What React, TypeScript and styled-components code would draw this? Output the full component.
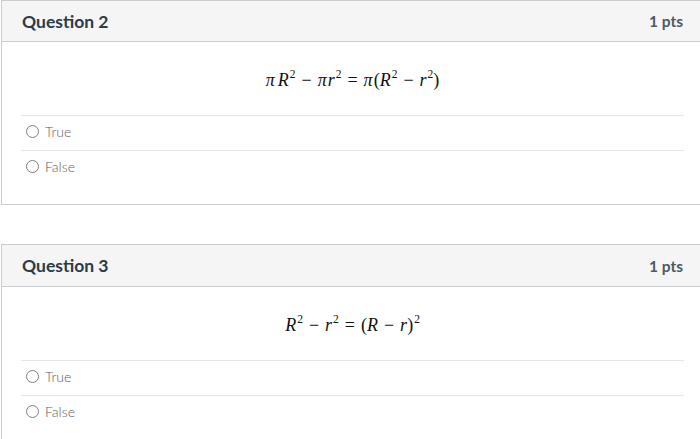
import React, { FC } from "react";
import styled, { createGlobalStyle } from "styled-components";

const GlobalStyle = createGlobalStyle`
  html, body {
    margin: 0;
    padding: 0;
    background: #ffffff;
    overflow: hidden;
  }
  body {
    font-family: Lato, "Liberation Sans", sans-serif;
    color: #2d3b45;
  }
`;

const Page = styled.div`
  display: flex;
  flex-direction: column;
  gap: 39px;
  padding-left: 1px;
  width: 703px;
`;

const Card = styled.section`
  border: 1px solid #c7cdd1;
  background: #ffffff;
`;

const Header = styled.header<{ $tall?: boolean }>`
  display: flex;
  justify-content: space-between;
  align-items: center;
  height: ${(p) => (p.$tall ? 41 : 40)}px;
  padding: 0 20px;
  background: #f5f5f5;
  border-bottom: 1px solid #c7cdd1;
`;

const Title = styled.h2`
  margin: 0;
  font-size: 17.5px;
  font-weight: 700;
  color: #2d3b45;
`;

const Points = styled.div`
  font-size: 15.5px;
  font-weight: 700;
  color: #4b5a64;
`;

const Body = styled.div`
  padding: 0 19px 19px 19px;
`;

const Equation = styled.div`
  display: flex;
  justify-content: center;
  align-items: center;
  height: 73px;
  padding-top: 4px;
  box-sizing: border-box;
  font-family: "Liberation Serif", "Times New Roman", serif;
  font-size: 18px;
  color: #111;
`;

const Formula = styled.span`
  white-space: nowrap;
`;

const Var = styled.span`
  font-style: italic;
`;

const Pi = styled.span<{ $gap?: number }>`
  font-style: italic;
  margin-right: ${(p) => p.$gap ?? 1}px;
`;

const Op = styled.span`
  margin: 0 6px;
`;

const Sup = styled.sup`
  font-size: 11.5px;
  vertical-align: 8px;
  line-height: 0;
  margin-left: 1px;
`;

const Answer = styled.label`
  display: flex;
  align-items: center;
  gap: 6px;
  height: 35px;
  padding: 0 0 3px 5px;
  border-top: 1px solid #e6e6e6;
  font-size: 14px;
  font-weight: 300;
  color: #5e5e5e;
  box-sizing: border-box;
`;

const Radio = styled.span`
  display: inline-block;
  width: 13px;
  height: 13px;
  border: 1.5px solid #808080;
  border-radius: 50%;
  box-sizing: border-box;
`;

interface QuestionProps {
  title: string;
  tall?: boolean;
  children: React.ReactNode;
}

const Question: FC<QuestionProps> = ({ title, tall, children }) => (
  <Card>
    <Header $tall={tall}>
      <Title>{title}</Title>
      <Points>1 pts</Points>
    </Header>
    <Body>
      <Equation>
        <Formula>{children}</Formula>
      </Equation>
      {["True", "False"].map((label) => (
        <Answer key={label}>
          <Radio />
          {label}
        </Answer>
      ))}
    </Body>
  </Card>
);

const App: FC = () => (
  <>
    <GlobalStyle />
    <Page>
      <Question title="Question 2">
        <Pi $gap={3}>π</Pi>
        <Var>R</Var>
        <Sup>2</Sup>
        <Op>−</Op>
        <Pi>π</Pi>
        <Var>r</Var>
        <Sup>2</Sup>
        <Op>=</Op>
        <Pi>π</Pi>(<Var>R</Var>
        <Sup>2</Sup>
        <Op>−</Op>
        <Var>r</Var>
        <Sup>2</Sup>)
      </Question>
      <Question title="Question 3" tall>
        <Var>R</Var>
        <Sup>2</Sup>
        <Op>−</Op>
        <Var>r</Var>
        <Sup>2</Sup>
        <Op>=</Op>(<Var>R</Var>
        <Op>−</Op>
        <Var>r</Var>)<Sup>2</Sup>
      </Question>
    </Page>
  </>
);

export default App;
